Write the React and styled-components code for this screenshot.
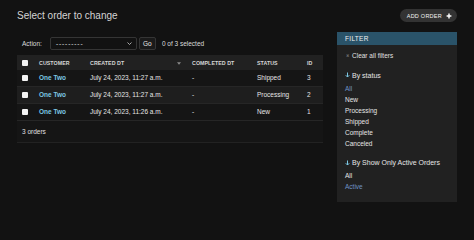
import styled, { createGlobalStyle } from "styled-components";

const GlobalStyle = createGlobalStyle`
  html, body {
    margin: 0;
    padding: 0;
    background: #121212;
  }
  body {
    font-family: "Liberation Sans", Arial, sans-serif;
    color: #eeeeee;
  }
`;

const Page = styled.div`
  padding: 9px 17px 0;
  height: 217px;
  overflow: hidden;
  box-sizing: border-box;
`;

const Header = styled.div`
  display: flex;
  justify-content: space-between;
  align-items: center;
  height: 13px;
`;

const Title = styled.h1`
  margin: 0;
  font-size: 10px;
  font-weight: 300;
  color: #d4d4d4;
  line-height: 13px;
`;

const AddButton = styled.a`
  display: flex;
  align-items: center;
  gap: 4px;
  height: 13px;
  padding: 0 5px 0 7px;
  border-radius: 7px;
  background: #333333;
  color: #f2f2f2;
  font-size: 5.5px;
  letter-spacing: 0.25px;
  text-transform: uppercase;
  box-sizing: border-box;
`;

const Main = styled.div`
  display: flex;
  gap: 14px;
  margin-top: 10px;
  align-items: flex-start;
`;

const Results = styled.div`
  width: 306px;
`;

const Actions = styled.div`
  display: flex;
  align-items: center;
  gap: 2px;
  height: 23px;
  padding: 0 5px;
  font-size: 6.5px;
  color: #dcdcdc;
`;

const Label = styled.span`
  margin-right: 6px;
`;

const SelectBox = styled.div`
  display: flex;
  align-items: center;
  justify-content: space-between;
  width: 87px;
  height: 13px;
  box-sizing: border-box;
  padding: 0 4px 0 5px;
  border: 1px solid #353535;
  border-radius: 2px;
  background: #121212;
  color: #e0e0e0;
  font-size: 6.5px;
  letter-spacing: 0.9px;
`;

const GoButton = styled.button`
  width: 17px;
  height: 13px;
  padding: 0;
  border: 1px solid #353535;
  border-radius: 2px;
  background: #1a1a1a;
  color: #e6e6e6;
  font-family: inherit;
  font-size: 6.5px;
`;

const Counter = styled.span`
  margin-left: 4px;
`;

const Table = styled.table`
  width: 306px;
  border-collapse: collapse;
  table-layout: fixed;
`;

const Th = styled.th`
  height: 15px;
  padding: 0 5px;
  text-align: left;
  background: #212121;
  color: #d6d6d6;
  font-size: 5.3px;
  font-weight: 700;
  text-transform: uppercase;
  letter-spacing: 0.05px;
  white-space: nowrap;
  position: relative;
`;

const SortIcon = styled.svg`
  position: absolute;
  right: 6px;
  top: 7px;
`;

const Row = styled.tr`
  background: ${(p) => (p.$alt ? "#1e1e1e" : "#151515")};
`;

const Td = styled.td`
  padding: 4px 5px;
  line-height: 8px;
  font-size: 6.5px;
  color: #e6e6e6;
  border-bottom: 1px solid #262626;
  white-space: nowrap;
`;

const Link = styled.a`
  color: #7cc7e3;
  font-weight: 700;
`;

const Check = styled.input`
  appearance: none;
  display: block;
  width: 6px;
  height: 6px;
  margin: 0;
  background: #f4f4f4;
  border-radius: 1px;
`;

const Paginator = styled.div`
  padding: 5px 5px;
  line-height: 11px;
  font-size: 6.5px;
  color: #e0e0e0;
  border-bottom: 1px solid #222222;
  background: #151515;
`;

const Filter = styled.div`
  width: 120px;
  background: #212121;
  padding-bottom: 10px;
`;

const FilterTitle = styled.h2`
  margin: 0;
  padding: 2.5px 8px;
  line-height: 8px;
  background: #2a5369;
  color: #f0f0f0;
  font-size: 6.5px;
  font-weight: 400;
  letter-spacing: 0.3px;
  text-transform: uppercase;
`;

const ClearAll = styled.div`
  display: flex;
  align-items: center;
  gap: 3px;
  padding: 5px 9px 0;
  line-height: 11px;
  font-size: 6.5px;
  color: #e0e0e0;
`;

const Cross = styled.span`
  font-size: 4px;
  color: #6a6a6a;
`;

const FilterHeading = styled.h3`
  display: flex;
  align-items: center;
  gap: 2px;
  margin: 8.5px 0 2px;
  padding: 0 8px;
  line-height: 11px;
  font-size: 7px;
  font-weight: 400;
  color: #e6e6e6;
`;

const FilterList = styled.ul`
  list-style: none;
  margin: 0;
  padding: 0 8px;
`;

const FilterItem = styled.li`
  line-height: 11px;
  font-size: 6.5px;
  color: ${(p) => (p.$selected ? "#6f94c6" : "#e6e6e6")};
`;

const Arrow = () => (
  <svg width="5" height="6" viewBox="0 0 10 12">
    <path d="M5 1v9M1.5 6.5L5 10l3.5-3.5" stroke="#7cc7e3" strokeWidth="2" fill="none" />
  </svg>
);

const orders = [
  { date: "July 24, 2023, 11:27 a.m.", status: "Shipped", id: 3 },
  { date: "July 24, 2023, 11:27 a.m.", status: "Processing", id: 2 },
  { date: "July 24, 2023, 11:26 a.m.", status: "New", id: 1 },
];

const statusFilters = ["All", "New", "Processing", "Shipped", "Complete", "Canceled"];

export default function App() {
  return (
    <Page>
      <GlobalStyle />
      <Header>
        <Title>Select order to change</Title>
        <AddButton>
          Add order
          <svg width="6" height="6" viewBox="0 0 10 10">
            <path d="M5 1v8M1 5h8" stroke="#fff" strokeWidth="2.4" />
          </svg>
        </AddButton>
      </Header>
      <Main>
        <Results>
          <Actions>
            <Label>Action:</Label>
            <SelectBox>
              <span>---------</span>
              <svg width="5" height="3" viewBox="0 0 10 6">
                <path d="M1 1l4 4 4-4" stroke="#cfcfcf" strokeWidth="1.6" fill="none" />
              </svg>
            </SelectBox>
            <GoButton>Go</GoButton>
            <Counter>0 of 3 selected</Counter>
          </Actions>
          <Table>
            <colgroup>
              <col style={{ width: 17 }} />
              <col style={{ width: 51 }} />
              <col style={{ width: 102 }} />
              <col style={{ width: 65 }} />
              <col style={{ width: 50 }} />
              <col style={{ width: 21 }} />
            </colgroup>
            <thead>
              <tr>
                <Th>
                  <Check type="checkbox" />
                </Th>
                <Th>Customer</Th>
                <Th>
                  Created dt
                  <SortIcon width="4" height="3" viewBox="0 0 8 5">
                    <path d="M0 0h8L4 5z" fill="#8a8a8a" />
                  </SortIcon>
                </Th>
                <Th>Completed dt</Th>
                <Th>Status</Th>
                <Th>ID</Th>
              </tr>
            </thead>
            <tbody>
              {orders.map((o, i) => (
                <Row key={o.id} $alt={i === 1}>
                  <Td>
                    <Check type="checkbox" />
                  </Td>
                  <Td>
                    <Link>One Two</Link>
                  </Td>
                  <Td>{o.date}</Td>
                  <Td>-</Td>
                  <Td>{o.status}</Td>
                  <Td>{o.id}</Td>
                </Row>
              ))}
            </tbody>
          </Table>
          <Paginator>3 orders</Paginator>
        </Results>
        <Filter>
          <FilterTitle>Filter</FilterTitle>
          <ClearAll>
            <Cross>✖</Cross>
            Clear all filters
          </ClearAll>
          <FilterHeading>
            <Arrow />
            By status
          </FilterHeading>
          <FilterList>
            {statusFilters.map((f) => (
              <FilterItem key={f} $selected={f === "All"}>
                {f}
              </FilterItem>
            ))}
          </FilterList>
          <FilterHeading>
            <Arrow />
            By Show Only Active Orders
          </FilterHeading>
          <FilterList>
            <FilterItem>All</FilterItem>
            <FilterItem $selected>Active</FilterItem>
          </FilterList>
        </Filter>
      </Main>
    </Page>
  );
}
